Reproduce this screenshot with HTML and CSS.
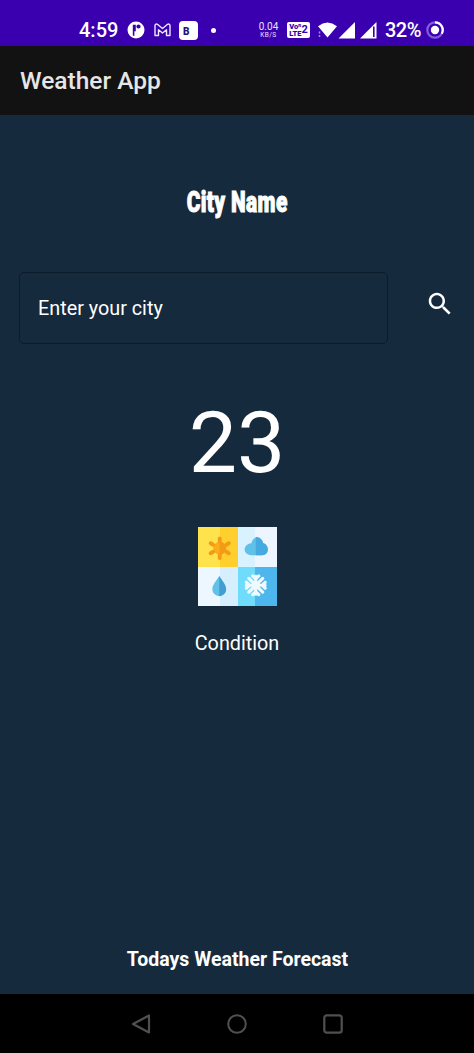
FILE: index.html
```html
<!DOCTYPE html>
<html lang="en">
<head>
<meta charset="utf-8">
<title>Weather App</title>
<link rel="stylesheet" href="styles.css">
</head>
<body>
<div class="screen">
  <header class="status">
    <div class="status-left">
      <span class="clock">4:59</span>
      <svg class="ic-round" width="18" height="18" viewBox="0 0 18 18"><circle cx="9" cy="9" r="8.500" fill="#fff"/><path d="M5.800 3.800h3v6.400h-1.400v4.600h-1.600z" fill="#3a00b0"/><circle cx="11.500" cy="5.500" r="2.100" fill="#3a00b0"/></svg>
      <svg class="ic-mail" width="17" height="14" viewBox="0 0 17 14"><path d="M1 12.500V2.200Q1.800.5 3.400 1.300L8.500 5.500l5.100-4.200Q15.200.5 16 2.200V12.500h-3.500V6.800l-4 3.200-4-3.200v5.700z" fill="none" stroke="#eee6ff" stroke-width="1.400" stroke-linejoin="round"/></svg>
      <span class="badge-b">B</span>
      <span class="dot"></span>
    </div>
    <div class="status-right">
      <span class="speed"><span class="rate">0.04</span><span class="unit">KB/S</span></span>
      <span class="volte"><span class="vo"><span>Vo<sup>n</sup></span><span>LTE</span></span><span class="sim">2</span></span>
      <svg class="ic-wifi" width="19" height="16" viewBox="0 0 19 16"><path d="M0 4.200Q9.500-3.200 19 4.200L9.500 15.500z" fill="#fff"/><path d="M1.500 9.500v2M1.500 13v2" stroke="#a58be0" stroke-width="1.500"/></svg>
      <svg class="ic-sig" width="17" height="17" viewBox="0 0 17 17"><path d="M17 0v16.500H.5z" fill="#fff"/></svg>
      <svg class="ic-sig2" width="17" height="17" viewBox="0 0 17 17"><path d="M16.500 0v16.500H0z" fill="#fff"/><path d="M13.800 4.500v10.500" stroke="#3a00b0" stroke-width="1.600"/></svg>
      <span class="battery">32%</span>
      <svg class="ic-ring" width="18" height="18" viewBox="0 0 18 18"><circle cx="9" cy="9" r="7.700" fill="none" stroke="#8060d8" stroke-width="2.200"/><path d="M9 1.300A7.700 7.700 0 0 1 15.700 12.800" fill="none" stroke="#fff" stroke-width="2.200"/><circle cx="9" cy="9" r="4.200" fill="#fff"/></svg>
    </div>
  </header>
  <div class="appbar"><h1>Weather App</h1></div>
  <main class="content">
    <h2 class="city"><span>City Name</span></h2>
    <div class="search">
      <div class="field">Enter your city</div>
      <svg class="ic-search" width="30" height="30" viewBox="0 0 24 24"><path fill="#fff" d="M15.500 14h-.79l-.28-.27C15.410 12.590 16 11.110 16 9.500 16 5.910 13.090 3 9.500 3S3 5.910 3 9.500 5.910 16 9.500 16c1.610 0 3.090-.59 4.230-1.570l.27.28v.79l5 4.990L20.490 19l-4.990-5zm-6 0C7.010 14 5 11.990 5 9.500S7.010 5 9.500 5 14 7.010 14 9.500 11.990 14 9.500 14z"/></svg>
    </div>
    <div class="temp">23</div>
    <svg class="weather" width="79" height="79" viewBox="0 0 80 80">
      <g shape-rendering="crispEdges">
        <path fill="#ffe34d" d="M0 0h22v40H0z"/><path fill="#ffcf2e" d="M22 0h18v40H22z"/>
        <path fill="#d9f2ff" d="M40 0h18v40H40z"/><path fill="#edf6ff" d="M58 0h22v40H58z"/>
        <path fill="#edf7ff" d="M0 40h22v40H0z"/><path fill="#d5efff" d="M22 40h18v40H22z"/>
        <path fill="#70dcfc" d="M40 40h18v40H40z"/><path fill="#4db7ed" d="M58 40h22v40H58z"/>
      </g>
      <circle cx="22" cy="21.500" r="6.500" fill="#f9ad16"/>
      <g stroke="#f39b18" stroke-width="4" stroke-linecap="round"><path d="M22 11.500v3M22 28.500v3M12.800 16.500l2.500 1.400M28.700 25.100l2.500 1.400M31.200 16.500l-2.500 1.400M15.300 25.100l-2.500 1.400"/></g>
      <path d="M22 15a6.500 6.500 0 0 1 0 13z" fill="#f39b18"/>
      <path d="M54 28.500c-9 0-9-11 0-12 2-8 10-8 12 0 6 1 7 12-1 12z" fill="#5fc0e8"/>
      <path d="M58.500 10.200c3.500 0 6.500 2.300 7.500 6.300 6 1 7 12-1 12h-6.500z" fill="#45aadf"/>
      <path d="M21.500 49.500c3 5 7 9 7 13.500a7 7 0 0 1-14 0c0-4.500 4-8.500 7-13.500z" fill="#61c2e9"/>
      <path d="M21.500 49.500c3 5 7 9 7 13.500a7 7 0 0 1-7 7z" fill="#419fd0"/>
      <g stroke="#effaff" stroke-width="3.200" stroke-linecap="round" fill="none"><path d="M58.500 50v18M49 59h19M51.500 52l14 14M65.500 52l-14 14M55.500 49.500l3 3 3-3M55.500 68.500l3-3 3 3M49 56l3 3-3 3M68 56l-3 3 3 3"/></g>
    </svg>
    <div class="condition">Condition</div>
    <div class="forecast">Todays Weather Forecast</div>
  </main>
  <nav class="navbar">
    <svg width="20" height="22" viewBox="0 0 20 22"><path d="M18 2.500v17L2 11z" fill="none" stroke="#505050" stroke-width="2.200" stroke-linejoin="round"/></svg>
    <svg width="20" height="20" viewBox="0 0 20 20"><circle cx="10" cy="10" r="8.800" fill="none" stroke="#505050" stroke-width="2"/></svg>
    <svg width="20" height="20" viewBox="0 0 20 20"><rect x="1.300" y="1.300" width="17.400" height="17.400" rx="2.500" fill="none" stroke="#505050" stroke-width="2.200"/></svg>
  </nav>
</div>
</body>
</html>
```
FILE: styles.css
```css
* { box-sizing: border-box; margin: 0; padding: 0; }
body { font-family: Roboto, "Liberation Sans", sans-serif; color: #fff; background: #162a3d; }
svg { display: block; flex: none; }
.screen { display: flex; flex-direction: column; width: 474px; height: 1053px; }

.status { display: flex; justify-content: space-between; height: 46px; padding: 15px 30px 0 79px; background: #3a00b0; }
.status-left, .status-right { display: flex; align-items: center; height: 30px; }
.clock, .battery { font-size: 20px; line-height: 30px; font-weight: 500; }
.clock { width: 38px; white-space: nowrap; }
.ic-round { margin-left: 10px; }
.ic-mail { margin-left: 9px; }
.badge-b { width: 19px; height: 19px; margin-left: 8px; padding-left: 4px; border-radius: 4px; background: #fff; color: #281078; font-size: 10px; line-height: 22px; font-weight: 900; }
.dot { width: 5px; height: 5px; margin-left: 13px; border-radius: 50%; background: #fff; }
.speed { display: flex; flex-direction: column; align-items: center; width: 21px; color: #e8e0ff; }
.rate { font-size: 10px; line-height: 11px; }
.unit { font-size: 6.500px; line-height: 7px; letter-spacing: 0.400px; }
.volte { display: flex; align-items: center; justify-content: center; width: 23px; height: 16px; margin-left: 8px; border-radius: 2px; background: #fff; color: #3a00b0; font-weight: 900; }
.vo { display: flex; flex-direction: column; font-size: 7.500px; line-height: 7px; }
.vo sup { font-size: 5px; line-height: 0; vertical-align: 2px; }
.sim { font-size: 11px; line-height: 14px; font-weight: 700; }
.ic-wifi { margin-left: 8px; }
.ic-sig { margin-left: 1px; }
.ic-sig2 { margin-left: 5px; }
.battery { width: 36px; margin-left: 8px; letter-spacing: -0.500px; }
.ic-ring { margin-left: 5px; }

.appbar { display: flex; align-items: center; height: 69px; padding-left: 20px; background: #121212; }
.appbar h1 { font-size: 24.500px; line-height: 32px; font-weight: 500; color: #e6e6e6; }

.content { display: flex; flex-direction: column; align-items: center; height: 879px; background: #162a3d; }
.city { height: 40px; margin-top: 67px; font-size: 29px; line-height: 41px; font-weight: 900; }
.city span { display: block; transform: scaleX(0.720); white-space: nowrap; letter-spacing: 0.500px; -webkit-text-stroke: 1px #fff; }
.search { display: flex; align-items: flex-start; width: 100%; margin-top: 50px; padding-left: 19px; }
.field { width: 369px; height: 72px; padding-left: 18px; border: 1px solid #0c1b2a; border-radius: 5px; font-size: 19.800px; line-height: 71px; }
.ic-search { margin: 17px 0 0 37px; }
.temp { margin-top: 48px; font-size: 86px; line-height: 102px; }
.weather { margin-top: 33px; }
.condition { margin-top: 26px; font-size: 19.800px; line-height: 24px; }
.forecast { margin-top: auto; margin-bottom: 22px; padding-left: 1px; font-size: 19.500px; line-height: 24px; font-weight: 700; }

.navbar { display: flex; align-items: center; gap: 76px; height: 59px; padding-left: 131px; background: #000; }
```
